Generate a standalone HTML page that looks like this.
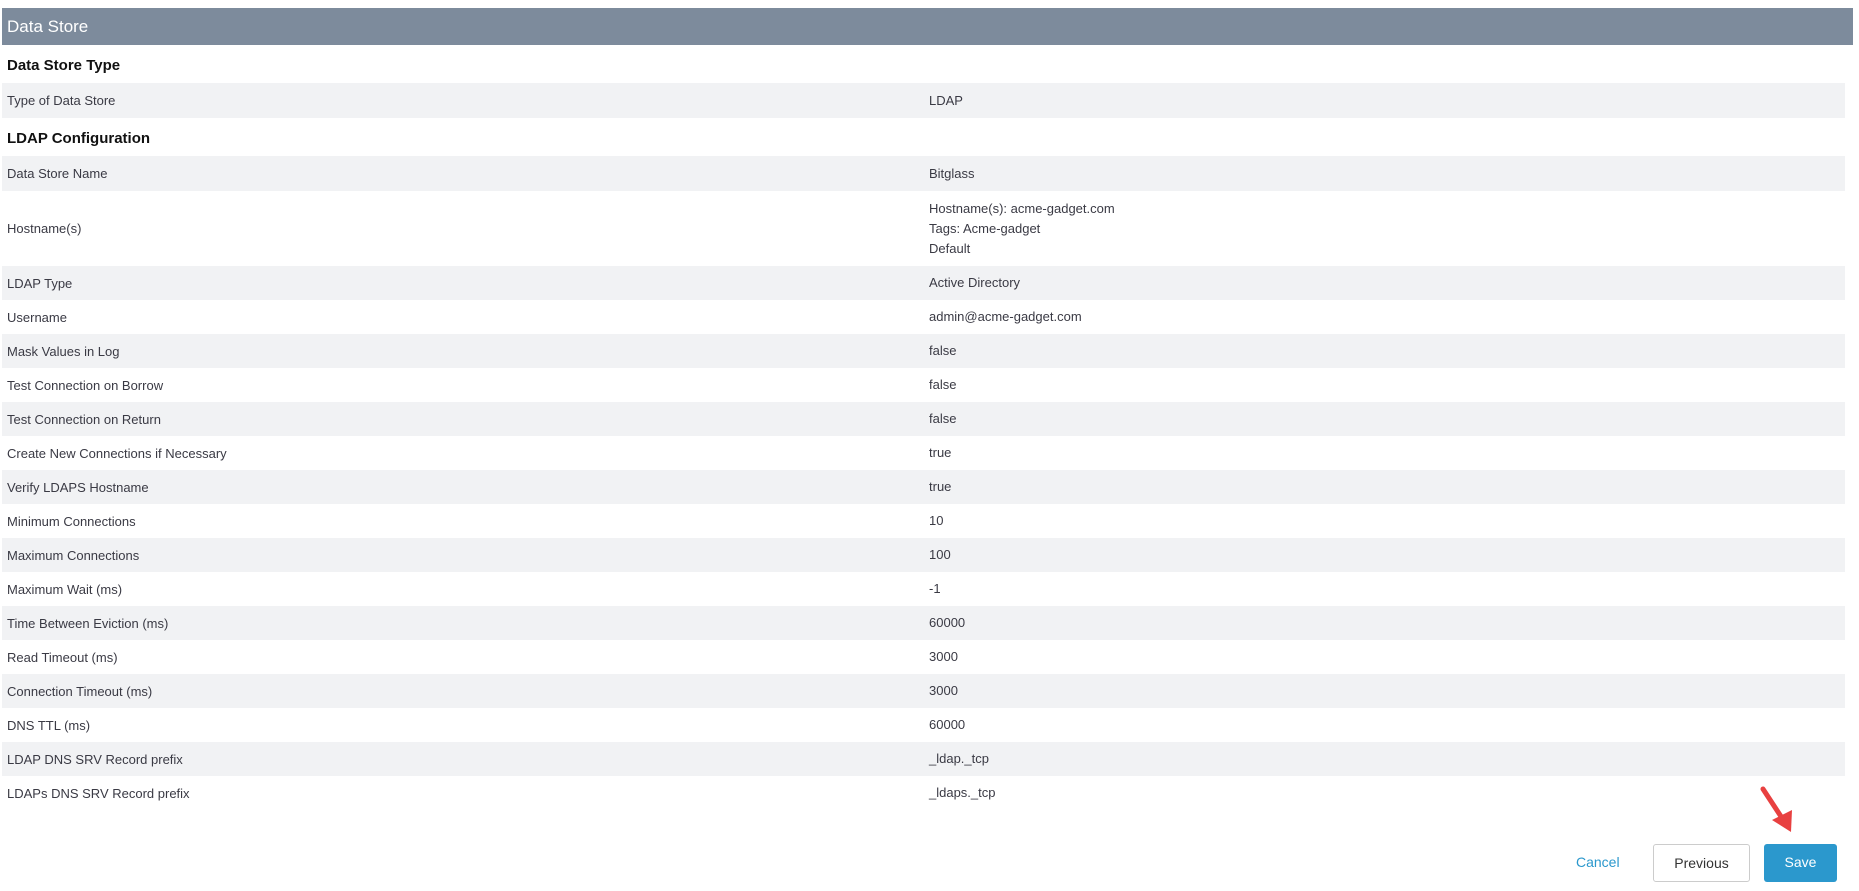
<!DOCTYPE html>
<html><head><meta charset="utf-8"><style>
body{margin:0;width:1859px;height:891px;background:#fff;font-family:"Liberation Sans",sans-serif;color:#3a3a44;position:relative;overflow:hidden}
.hdr{position:absolute;left:2px;top:8px;width:1851px;height:37px;background:#7d8b9c;color:#fff;font-size:17px;line-height:37px;padding-left:5px;box-sizing:border-box}
.tbl{position:absolute;left:2px;top:45px;width:1843px}
.r{display:flex;align-items:center;font-size:13px;height:34px}
.r.g{background:#f1f2f4}
.r .l{width:927px;padding-left:5px;box-sizing:border-box}
.r .v{line-height:20px}
.s{height:38px;line-height:42px;font-size:15px;font-weight:bold;color:#111;padding-left:5px}
.btn{position:absolute;top:844px;height:38px;box-sizing:border-box;font-size:14px;line-height:36px;text-align:center;border-radius:3px}
</style></head><body>
<div class="hdr">Data Store</div>
<div class="tbl">
<div class="s">Data Store Type</div>
<div class="r g" style="height:35px"><div class="l">Type of Data Store</div><div class="v">LDAP</div></div>
<div class="s">LDAP Configuration</div>
<div class="r g" style="height:35px"><div class="l">Data Store Name</div><div class="v">Bitglass</div></div>
<div class="r" style="height:75px"><div class="l">Hostname(s)</div><div class="v">Hostname(s): acme-gadget.com<br>Tags: Acme-gadget<br>Default</div></div>
<div class="r g"><div class="l">LDAP Type</div><div class="v">Active Directory</div></div>
<div class="r"><div class="l">Username</div><div class="v">admin@acme-gadget.com</div></div>
<div class="r g"><div class="l">Mask Values in Log</div><div class="v">false</div></div>
<div class="r"><div class="l">Test Connection on Borrow</div><div class="v">false</div></div>
<div class="r g"><div class="l">Test Connection on Return</div><div class="v">false</div></div>
<div class="r"><div class="l">Create New Connections if Necessary</div><div class="v">true</div></div>
<div class="r g"><div class="l">Verify LDAPS Hostname</div><div class="v">true</div></div>
<div class="r"><div class="l">Minimum Connections</div><div class="v">10</div></div>
<div class="r g"><div class="l">Maximum Connections</div><div class="v">100</div></div>
<div class="r"><div class="l">Maximum Wait (ms)</div><div class="v">-1</div></div>
<div class="r g"><div class="l">Time Between Eviction (ms)</div><div class="v">60000</div></div>
<div class="r"><div class="l">Read Timeout (ms)</div><div class="v">3000</div></div>
<div class="r g"><div class="l">Connection Timeout (ms)</div><div class="v">3000</div></div>
<div class="r"><div class="l">DNS TTL (ms)</div><div class="v">60000</div></div>
<div class="r g"><div class="l">LDAP DNS SRV Record prefix</div><div class="v">_ldap._tcp</div></div>
<div class="r"><div class="l">LDAPs DNS SRV Record prefix</div><div class="v">_ldaps._tcp</div></div>
</div>
<div style="position:absolute;left:1576px;top:854px;font-size:14px;color:#2b98cd">Cancel</div>
<div class="btn" style="left:1653px;width:97px;border:1px solid #ccc;color:#333">Previous</div>
<div class="btn" style="left:1764px;width:73px;background:#2b98cd;color:#fff">Save</div>
<svg style="position:absolute;left:1750px;top:780px" width="50" height="60"><line x1="13" y1="9" x2="32" y2="38" stroke="#e84040" stroke-width="5" stroke-linecap="round"/><polygon points="22,40 42,30 41,52" fill="#e84040"/></svg>
</body></html>
